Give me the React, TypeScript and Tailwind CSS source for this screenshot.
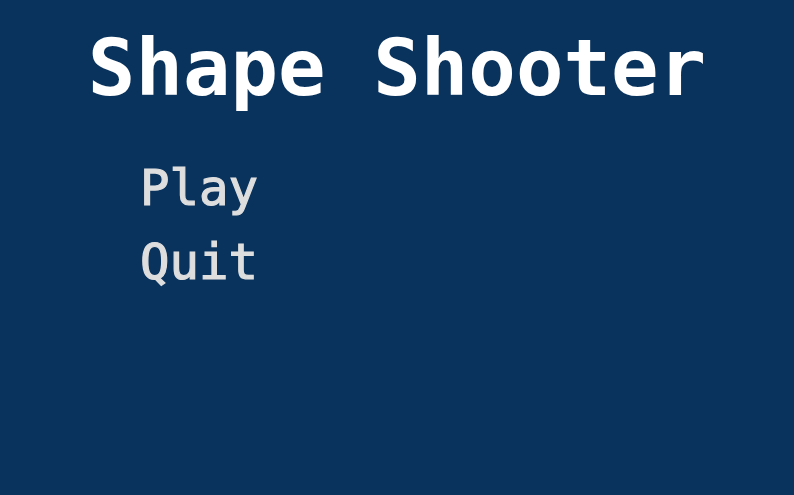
export default function App() {
  return (
    <div
      className="w-[794px] h-[495px] bg-[#09335d] overflow-hidden flex flex-col"
      style={{ fontFamily: '"DejaVu Sans Mono", "Liberation Mono", monospace' }}
    >
      <h1 className="text-center text-white font-bold text-[79px] leading-none mt-[29px]">
        Shape Shooter
      </h1>
      <ul className="mt-[56px] ml-[140px] flex flex-col gap-[24px] text-[#dedede] font-normal text-[49px] leading-[50px] [-webkit-text-stroke:1.2px_#dedede]">
        <li>Play</li>
        <li>Quit</li>
      </ul>
    </div>
  );
}
